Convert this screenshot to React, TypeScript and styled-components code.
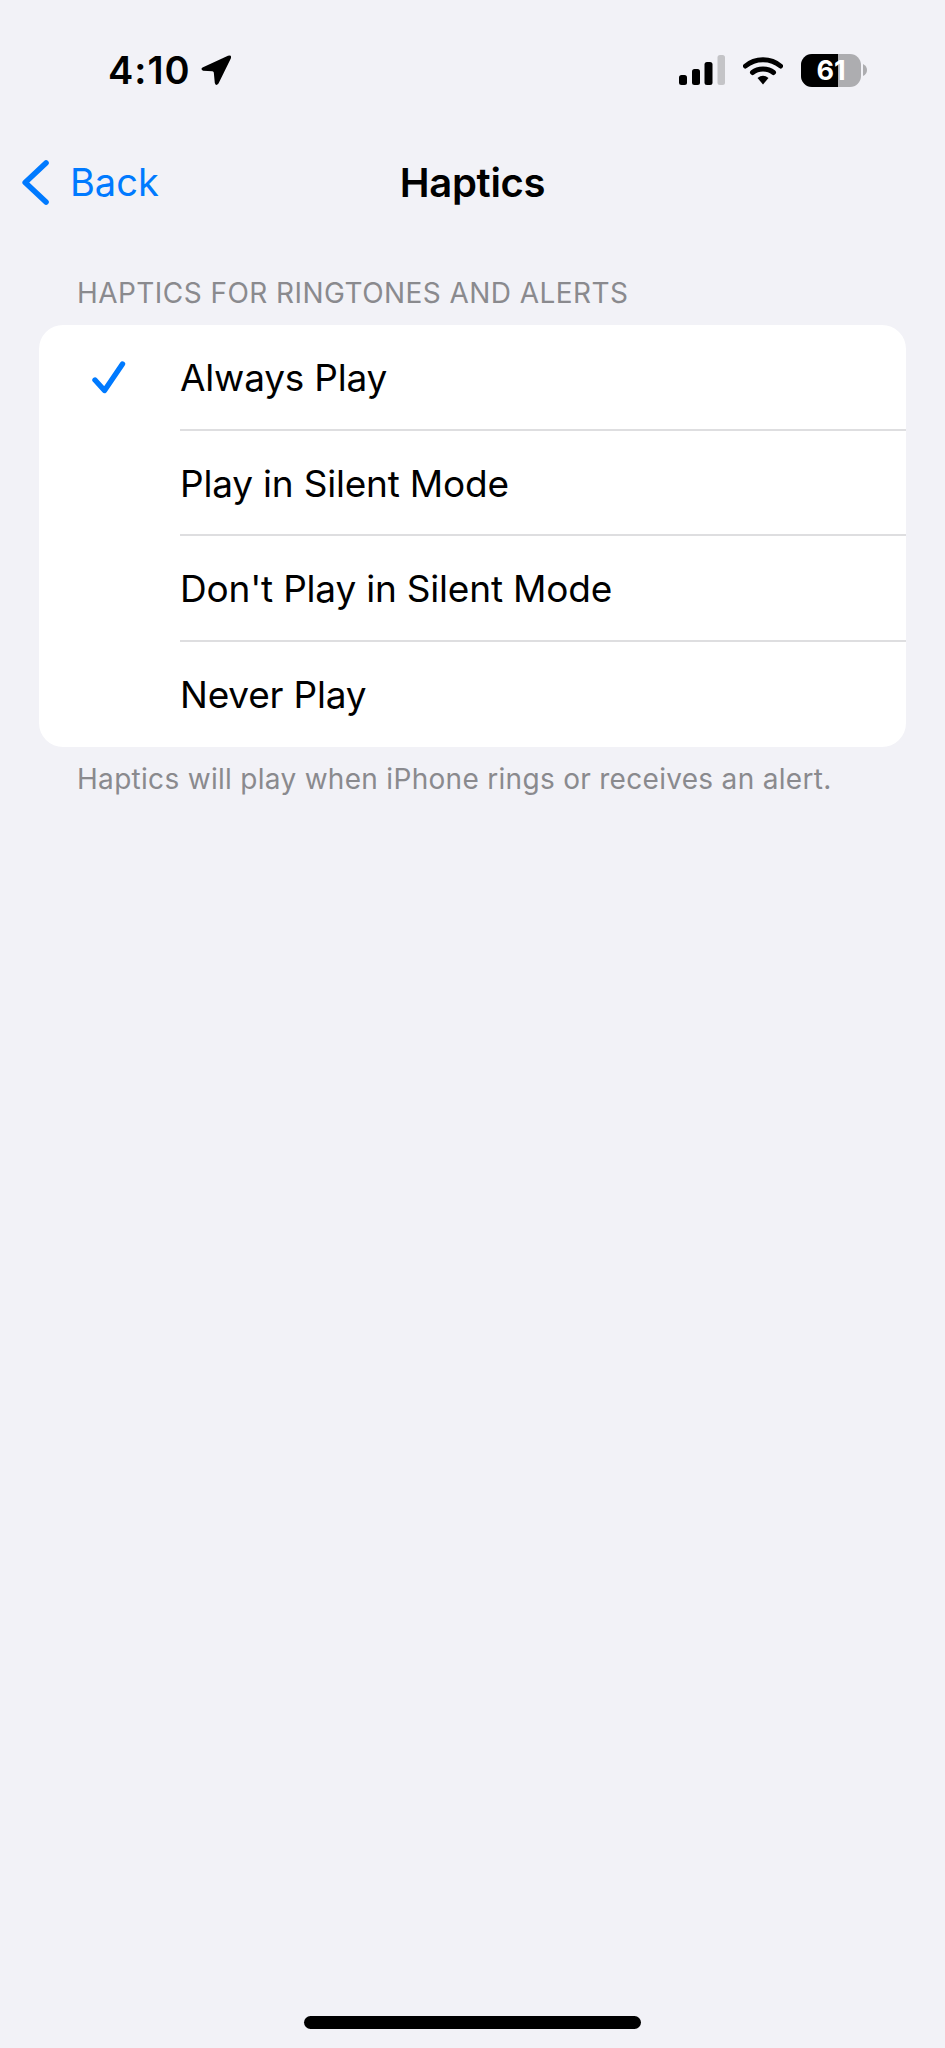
import styled, { createGlobalStyle } from "styled-components";

const GlobalStyle = createGlobalStyle`
	html,
	body {
		margin: 0;
		padding: 0;
		background: #f2f2f7;
	}
`;

const Page = styled.div`
	width: 945px;
	height: 2048px;
	display: flex;
	flex-direction: column;
	overflow: hidden;
	background: #f2f2f7;
	font-family: Inter, "Liberation Sans", sans-serif;
	color: #000;
`;

const StatusBar = styled.div`
	height: 52px;
	margin-top: 44px;
	padding: 0 78px 0 108px;
	display: flex;
	align-items: center;
	justify-content: space-between;
`;

const TimeGroup = styled.div`
	display: flex;
	align-items: center;
	gap: 9px;
`;

const Time = styled.span`
	font-size: 38px;
	line-height: 48px;
	font-weight: 600;
	letter-spacing: 1px;
`;

const StatusIcons = styled.div`
	display: flex;
	align-items: center;
	gap: 18px;
`;

const NavBar = styled.div`
	height: 106px;
	margin-top: 33px;
	display: flex;
	align-items: center;
	justify-content: center;
	position: relative;
`;

const BackLink = styled.div`
	position: absolute;
	left: 22px;
	top: 0;
	bottom: 0;
	display: flex;
	align-items: center;
	gap: 21px;
	color: #007aff;
	font-size: 38px;
`;

const NavTitle = styled.div`
	font-size: 40px;
	font-weight: 600;
	letter-spacing: -0.3px;
`;

const SectionHeader = styled.div`
	margin: 40px 0 0 77px;
	height: 36px;
	line-height: 36px;
	font-size: 28px;
	letter-spacing: 0.44px;
	color: #8a8a8e;
`;

const Card = styled.div`
	margin: 14px 39px 0;
	background: #fff;
	border-radius: 24px;
	overflow: hidden;
`;

const Row = styled.div`
	height: 105.5px;
	display: flex;
	align-items: center;
`;

const CheckCell = styled.div`
	width: 141px;
	flex: none;
	padding-left: 53px;
	box-sizing: border-box;
	display: flex;
	align-items: center;
`;

const RowBody = styled.div<{ $last?: boolean }>`
	flex: 1;
	align-self: stretch;
	display: flex;
	align-items: center;
	font-size: 37px;
	letter-spacing: -0.2px;
	box-shadow: ${(p) => (p.$last ? "none" : "inset 0 -2px 0 #dedee0")};
`;

const Footer = styled.div`
	margin: 14px 0 0 77px;
	line-height: 36px;
	font-size: 28px;
	letter-spacing: 0.3px;
	color: #8a8a8e;
`;

const HomeArea = styled.div`
	margin-top: auto;
	padding-bottom: 19px;
	display: flex;
	justify-content: center;
`;

const HomeBar = styled.div`
	width: 337px;
	height: 13px;
	border-radius: 7px;
	background: #000;
`;

const BatteryGroup = styled.div`
	display: flex;
	align-items: center;
	gap: 2px;
`;

const BatteryWrap = styled.div`
	position: relative;
	width: 60px;
	height: 33px;
	border-radius: 11px;
	overflow: hidden;
	background: #adadb0;
`;

const BatteryFill = styled.div`
	height: 100%;
	background: #000;
`;

const BatteryText = styled.span`
	position: absolute;
	inset: 0;
	display: flex;
	align-items: center;
	justify-content: center;
	color: #fff;
	font-size: 27px;
	font-weight: 700;
`;

const options = ["Always Play", "Play in Silent Mode", "Don't Play in Silent Mode", "Never Play"];

const LocationIcon = () => (
	<svg width="32" height="32" viewBox="0 0 32 32">
		<path d="M2.5 13.5 L28 1.8 Q32 0.5 30.8 4.5 L18.5 29.5 Q16 32.5 14.8 29 L13.8 18.5 Q13.6 17.4 12.4 17.2 L3 16.7 Q0.2 15.4 2.5 13.5 Z" fill="#000" />
	</svg>
);

const SignalIcon = () => (
	<svg width="46" height="31" viewBox="0 0 46 31">
		<rect x="0" y="20" width="8" height="10" rx="2.5" fill="#000" />
		<rect x="13" y="14" width="8" height="16" rx="2.5" fill="#000" />
		<rect x="25.5" y="7" width="8" height="23" rx="2.5" fill="#000" />
		<rect x="38.5" y="0" width="7.5" height="30" rx="2.5" fill="#c4c4c7" />
	</svg>
);

const WifiIcon = () => (
	<svg width="40" height="29" viewBox="0 0 40 29">
		<path d="M2.5 10 C12 1.5 28 1.5 37.5 10" fill="none" stroke="#000" strokeWidth="5" strokeLinecap="round" />
		<path d="M9.5 16.5 C15 11.8 25 11.8 30.5 16.5" fill="none" stroke="#000" strokeWidth="5" strokeLinecap="round" />
		<path d="M14.5 22 Q20 17.5 25.5 22 L20 28.5 Z" fill="#000" />
	</svg>
);

const BatteryCap = () => (
	<svg width="4" height="12" viewBox="0 0 4 12">
		<path d="M0 0 Q4 2 4 6 Q4 10 0 12 Z" fill="#adadb0" />
	</svg>
);

const BackChevron = () => (
	<svg width="27" height="45" viewBox="0 0 27 45">
		<path d="M24 3 L3.2 22.5 L24 42" fill="none" stroke="#007aff" strokeWidth="5.6" strokeLinecap="round" strokeLinejoin="round" />
	</svg>
);

const CheckIcon = () => (
	<svg width="34" height="33" viewBox="0 0 34 33">
		<path d="M3 19 L12.5 29.5 L30.5 3" fill="none" stroke="#007aff" strokeWidth="5.4" strokeLinecap="round" strokeLinejoin="round" />
	</svg>
);

const App = () => {
	const battery = 61;

	return (
		<Page>
			<GlobalStyle />
			<StatusBar>
				<TimeGroup>
					<Time>4:10</Time>
					<LocationIcon />
				</TimeGroup>
				<StatusIcons>
					<SignalIcon />
					<WifiIcon />
					<BatteryGroup>
						<BatteryWrap>
							<BatteryFill style={{ width: `${battery}%` }} />
							<BatteryText>{battery}</BatteryText>
						</BatteryWrap>
						<BatteryCap />
					</BatteryGroup>
				</StatusIcons>
			</StatusBar>
			<NavBar>
				<BackLink>
					<BackChevron />
					Back
				</BackLink>
				<NavTitle>Haptics</NavTitle>
			</NavBar>
			<SectionHeader>HAPTICS FOR RINGTONES AND ALERTS</SectionHeader>
			<Card>
				{options.map((option, index) => (
					<Row key={option}>
						<CheckCell>{index === 0 && <CheckIcon />}</CheckCell>
						<RowBody $last={index === options.length - 1}>{option}</RowBody>
					</Row>
				))}
			</Card>
			<Footer>Haptics will play when iPhone rings or receives an alert.</Footer>
			<HomeArea>
				<HomeBar />
			</HomeArea>
		</Page>
	);
};

export default App;
